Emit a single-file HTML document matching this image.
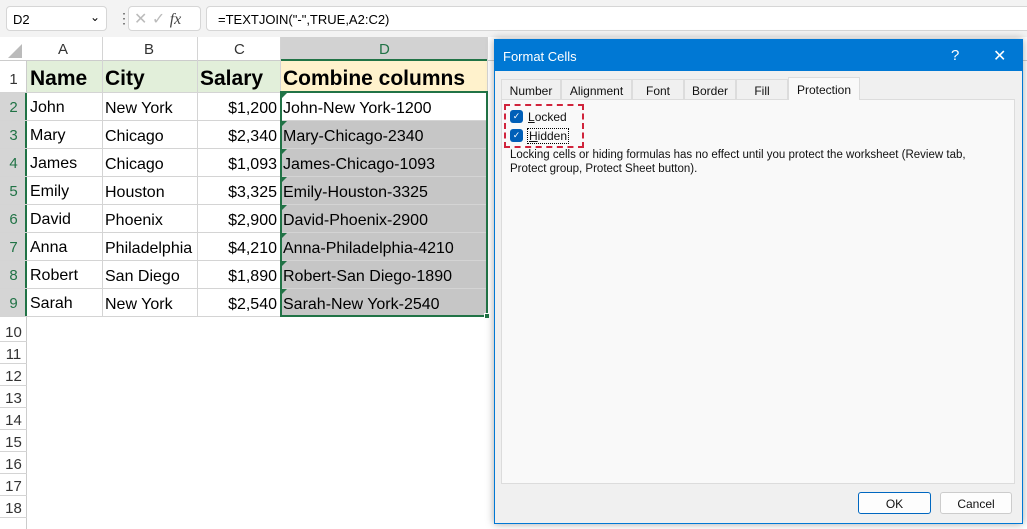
<!DOCTYPE html>
<html><head><style>
*{margin:0;padding:0;box-sizing:border-box}
body{width:1027px;height:529px;overflow:hidden;background:#fff;font-family:"Liberation Sans",sans-serif;position:relative}
.a{position:absolute}
.tb{left:0;top:0;width:1027px;height:37px;background:#f3f3f3}
.box{background:#fff;border:1px solid #d6d6d6;border-radius:4px}
.hl{background:#d5d5d5}
.v{position:absolute;width:1px;background:#d4d4d4}
.h{position:absolute;height:1px;background:#d4d4d4}
.c{position:absolute;font-size:16px;color:#000;white-space:nowrap}
.rn{position:absolute;left:0;width:27px;text-align:center;font-size:15px;color:#333}
.dt{font-family:"Liberation Sans",sans-serif;font-size:12px;color:#111}
</style></head><body>
<div class="a tb"></div>
<div class="a box" style="left:6px;top:6px;width:101px;height:25px;font-size:13px;padding:5px 6px">D2<span style="position:absolute;right:6px;top:3px;font-size:12px">&#8964;</span></div>
<div class="a" style="left:117px;top:10px;font-size:14px;color:#555">&#8942;</div>
<div class="a box" style="left:128px;top:6px;width:73px;height:25px;font-size:16px;color:#bbb;padding:2px 5px">✕ ✓ <i style="color:#444;font-family:'Liberation Serif',serif">fx</i></div>
<div class="a box" style="left:206px;top:6px;width:830px;height:25px;font-size:13px;padding:5px 11px">=TEXTJOIN("-",TRUE,A2:C2)</div>
<div class="a" style="left:0;top:37px;width:1027px;height:24px;background:#fff;border-bottom:1px solid #ccc"></div>
<div class="a" style="left:8px;top:44px;width:0;height:0;border-left:14px solid transparent;border-bottom:14px solid #bbb"></div>
<div class="a hl" style="left:280px;top:37px;width:207px;height:24px;border-bottom:2px solid #217346;background:#d2d2d2"></div>
<div class="c" style="left:58px;top:41px;font-size:15px;color:#333">A</div>
<div class="c" style="left:144px;top:41px;font-size:15px;color:#333">B</div>
<div class="c" style="left:234px;top:41px;font-size:15px;color:#333">C</div>
<div class="c" style="left:379px;top:41px;font-size:15px;color:#217346">D</div>
<div class="a" style="left:0;top:61px;width:27px;height:468px;background:#fff;border-right:1px solid #ccc"></div>
<div class="a hl" style="left:0;top:92px;width:26px;height:224px"></div>
<div class="a" style="left:25px;top:92px;width:2px;height:224px;background:#217346"></div>
<div class="a" style="left:27px;top:61px;width:253px;height:31px;background:#e2efda"></div>
<div class="a" style="left:280px;top:61px;width:207px;height:31px;background:#fff2cc"></div>
<div class="a" style="left:280px;top:120px;width:207px;height:196px;background:#c6c6c6"></div>
<div class="v" style="left:102px;top:37px;height:279px"></div>
<div class="v" style="left:197px;top:37px;height:279px"></div>
<div class="v" style="left:280px;top:37px;height:279px"></div>
<div class="v" style="left:487px;top:37px;height:279px"></div>
<div id="rows"></div>
<div class="a" style="left:280px;top:91px;width:208px;height:226px;border:2px solid #217346"></div>
<div class="a" style="left:484px;top:313px;width:6px;height:6px;background:#217346;border:1px solid #fff"></div>
<script>
var d=[["Name","City","Salary","Combine columns"],["John","New York","$1,200"],["Mary","Chicago","$2,340"],["James","Chicago","$1,093"],["Emily","Houston","$3,325"],["David","Phoenix","$2,900"],["Anna","Philadelphia","$4,210"],["Robert","San Diego","$1,890"],["Sarah","New York","$2,540"]];
var h="";
for(var i=0;i<9;i++){var t=i==0?61:92+(i-1)*28,ht=i==0?31:28;
h+='<div class="h" style="left:0;top:'+(t+ht)+'px;width:487px"></div>';
h+='<div class="rn" style="top:'+(t+ht-21)+'px;color:'+(i?'#217346':'#333')+'">'+(i+1)+'</div>';
if(i==0){h+='<div class="c" style="left:30px;top:67px;font-size:21px;font-weight:bold">Name</div><div class="c" style="left:105px;top:67px;font-size:21px;font-weight:bold">City</div><div class="c" style="left:200px;top:67px;font-size:21px;font-weight:bold">Salary</div><div class="c" style="left:283px;top:67px;font-size:21px;font-weight:bold">Combine columns</div>';}
else{var r=d[i];h+='<div class="c" style="left:30px;top:'+(t+7)+'px">'+r[0]+'</div><div class="c" style="left:105px;top:'+(t+8)+'px">'+r[1]+'</div><div class="c" style="right:'+(1027-277)+'px;top:'+(t+8)+'px">'+r[2]+'</div><div class="c" style="left:283px;top:'+(t+8)+'px">'+r[0]+'-'+r[1]+'-'+r[2].replace(/[$,]/g,'')+'</div><div class="a" style="left:282px;top:'+(t+1)+'px;width:0;height:0;border-top:5px solid #217346;border-right:5px solid transparent"></div>';}}
for(var j=10;j<=18;j++){var t=321+(j-10)*22;h+='<div class="h" style="left:0;top:'+(t+20)+'px;width:27px"></div><div class="rn" style="top:'+(t+3)+'px">'+j+'</div>';}
document.getElementById("rows").innerHTML=h;
</script>
<div class="a" style="left:494px;top:39px;width:529px;height:485px;background:#f0f0f0;border:1px solid #0078d4;box-shadow:0 0 8px rgba(0,0,0,.35)">
<div class="a" style="left:0;top:0;width:527px;height:31px;background:#0078d4"></div>
<div class="a dt" style="left:8px;top:9px;color:#fff;font-size:13px">Format Cells</div>
<div class="a dt" style="left:456px;top:7px;color:#fff;font-size:15px">?</div>
<div class="a dt" style="left:498px;top:6px;color:#fff;font-size:16px">✕</div>
<div class="a" style="left:6px;top:59px;width:514px;height:385px;background:#f9f9f9;border:1px solid #dcdcdc"></div>
<div class="a dt" style="left:6px;top:39px;width:60px;height:21px;border:1px solid #dcdcdc;background:#f0f0f0;text-align:center;padding-top:4px">Number</div>
<div class="a dt" style="left:66px;top:39px;width:71px;height:21px;border:1px solid #dcdcdc;background:#f0f0f0;text-align:center;padding-top:4px">Alignment</div>
<div class="a dt" style="left:137px;top:39px;width:52px;height:21px;border:1px solid #dcdcdc;background:#f0f0f0;text-align:center;padding-top:4px">Font</div>
<div class="a dt" style="left:189px;top:39px;width:52px;height:21px;border:1px solid #dcdcdc;background:#f0f0f0;text-align:center;padding-top:4px">Border</div>
<div class="a dt" style="left:241px;top:39px;width:52px;height:21px;border:1px solid #dcdcdc;background:#f0f0f0;text-align:center;padding-top:4px">Fill</div>
<div class="a dt" style="left:293px;top:37px;width:72px;height:23px;border:1px solid #dcdcdc;border-bottom:none;background:#f9f9f9;text-align:center;padding-top:5px">Protection</div>
<div class="a" style="left:9px;top:64px;width:80px;height:44px;border:2px dashed #d0243c"></div>
<div class="a" style="left:15px;top:70px;width:13px;height:13px;background:#005fb8;border-radius:3px;color:#fff;font-size:9px;text-align:center;line-height:13px">✓</div>
<div class="a dt" style="left:33px;top:70px"><u>L</u>ocked</div>
<div class="a" style="left:15px;top:89px;width:13px;height:13px;background:#005fb8;border-radius:3px;color:#fff;font-size:9px;text-align:center;line-height:13px">✓</div>
<div class="a dt" style="left:32px;top:88px;border:1px dotted #000;padding:0 1px"><u>H</u>idden</div>
<div class="a dt" style="left:15px;top:108px;font-size:11.5px;line-height:14px;width:480px">Locking cells or hiding formulas has no effect until you protect the worksheet (Review tab, Protect group, Protect Sheet button).</div>
<div class="a dt" style="left:363px;top:452px;width:73px;height:22px;background:#fdfdfd;border:1px solid #0067c0;border-radius:3px;text-align:center;padding-top:4px">OK</div>
<div class="a dt" style="left:445px;top:452px;width:72px;height:22px;background:#fdfdfd;border:1px solid #ccc;border-radius:3px;text-align:center;padding-top:4px">Cancel</div>
</div>
</body></html>
